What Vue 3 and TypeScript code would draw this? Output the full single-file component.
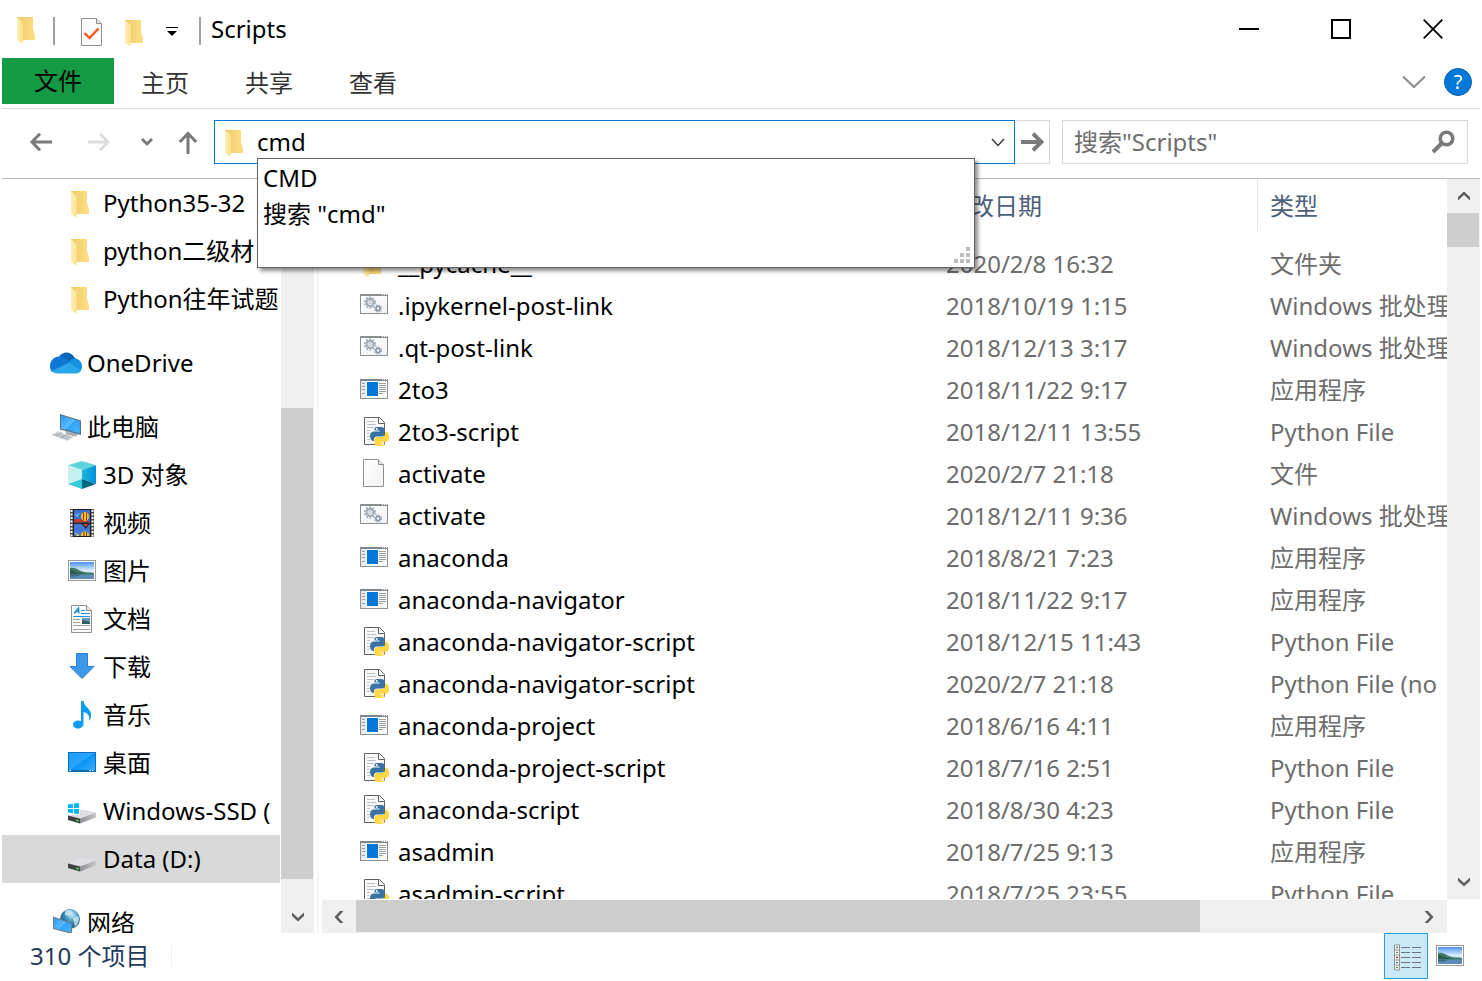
<script setup lang="ts">
import { ref } from 'vue'

type IconName =
  | 'folder' | 'onedrive' | 'pc' | 'cube' | 'video' | 'picture' | 'document'
  | 'download' | 'music' | 'desktop' | 'ssd' | 'drive' | 'network'
  | 'batch' | 'exe' | 'python' | 'blank'

interface TreeItem {
  label: string
  icon: IconName
  selected?: boolean
}

interface TreeGroup {
  root?: TreeItem
  children: TreeItem[]
}

interface FileRow {
  name: string
  icon: IconName
  date: string
  type: string
}

const address = ref('cmd')
const query = ref('')
const suggestions: string[] = ['CMD', '搜索 "cmd"']
const tabs: string[] = ['主页', '共享', '查看']

const tree: TreeGroup[] = [
  {
    children: [
      { label: 'Python35-32', icon: 'folder' },
      { label: 'python二级材', icon: 'folder' },
      { label: 'Python往年试题', icon: 'folder' },
    ],
  },
  { root: { label: 'OneDrive', icon: 'onedrive' }, children: [] },
  {
    root: { label: '此电脑', icon: 'pc' },
    children: [
      { label: '3D 对象', icon: 'cube' },
      { label: '视频', icon: 'video' },
      { label: '图片', icon: 'picture' },
      { label: '文档', icon: 'document' },
      { label: '下载', icon: 'download' },
      { label: '音乐', icon: 'music' },
      { label: '桌面', icon: 'desktop' },
      { label: 'Windows-SSD (', icon: 'ssd' },
      { label: 'Data (D:)', icon: 'drive', selected: true },
    ],
  },
  { root: { label: '网络', icon: 'network' }, children: [] },
]

const BAT = 'Windows 批处理'
const APP = '应用程序'
const PY = 'Python File'

const files: FileRow[] = [
  { name: '__pycache__', icon: 'folder', date: '2020/2/8 16:32', type: '文件夹' },
  { name: '.ipykernel-post-link', icon: 'batch', date: '2018/10/19 1:15', type: BAT },
  { name: '.qt-post-link', icon: 'batch', date: '2018/12/13 3:17', type: BAT },
  { name: '2to3', icon: 'exe', date: '2018/11/22 9:17', type: APP },
  { name: '2to3-script', icon: 'python', date: '2018/12/11 13:55', type: PY },
  { name: 'activate', icon: 'blank', date: '2020/2/7 21:18', type: '文件' },
  { name: 'activate', icon: 'batch', date: '2018/12/11 9:36', type: BAT },
  { name: 'anaconda', icon: 'exe', date: '2018/8/21 7:23', type: APP },
  { name: 'anaconda-navigator', icon: 'exe', date: '2018/11/22 9:17', type: APP },
  { name: 'anaconda-navigator-script', icon: 'python', date: '2018/12/15 11:43', type: PY },
  { name: 'anaconda-navigator-script', icon: 'python', date: '2020/2/7 21:18', type: 'Python File (no' },
  { name: 'anaconda-project', icon: 'exe', date: '2018/6/16 4:11', type: APP },
  { name: 'anaconda-project-script', icon: 'python', date: '2018/7/16 2:51', type: PY },
  { name: 'anaconda-script', icon: 'python', date: '2018/8/30 4:23', type: PY },
  { name: 'asadmin', icon: 'exe', date: '2018/7/25 9:13', type: APP },
  { name: 'asadmin-script', icon: 'python', date: '2018/7/25 23:55', type: PY },
]
</script>

<template>
  <div class="window">
    <svg class="defs" aria-hidden="true">
      <defs>
        <linearGradient id="g-folder" x1="0" x2="1"><stop offset="0" stop-color="#efc968" /><stop offset="1" stop-color="#ffdf85" /></linearGradient>
        <linearGradient id="g-flap" x1="0" x2="1"><stop offset="0" stop-color="#fff0b8" /><stop offset="1" stop-color="#fbdf90" /></linearGradient>
        <linearGradient id="g-screen" x1="0" y1="0" x2="1" y2="1"><stop offset="0" stop-color="#2a9bf5" /><stop offset=".5" stop-color="#5cbcff" /><stop offset=".52" stop-color="#2fa5fb" /><stop offset="1" stop-color="#45b2ff" /></linearGradient>
        <linearGradient id="g-right" x1="0" x2="1"><stop offset="0" stop-color="#1cb8e0" /><stop offset="1" stop-color="#0090d8" /></linearGradient>
        <linearGradient id="g-sky" x1="0" y1="0" x2="0" y2="1"><stop offset="0" stop-color="#4a92ee" /><stop offset=".5" stop-color="#dcefff" /><stop offset="1" stop-color="#8fb8dd" /></linearGradient>
        <linearGradient id="g-desk" x1="0" y1="0" x2="1" y2="1"><stop offset="0" stop-color="#1c9dfb" /><stop offset=".48" stop-color="#27a5ff" /><stop offset=".5" stop-color="#0a93f5" /><stop offset="1" stop-color="#38b0ff" /></linearGradient>
        <linearGradient id="g-side" x1="0" x2="1"><stop offset="0" stop-color="#8c8e92" /><stop offset="1" stop-color="#c6c8cb" /></linearGradient>
        <radialGradient id="g-globe" cx=".6" cy=".3"><stop offset="0" stop-color="#c7ecf8" /><stop offset=".5" stop-color="#5aa9cc" /><stop offset="1" stop-color="#2b6f96" /></radialGradient>
        <linearGradient id="g-page" x1="0" y1="0" x2="1" y2="1"><stop offset="0" stop-color="#ffffff" /><stop offset="1" stop-color="#f1f2f3" /></linearGradient>
      </defs>

      <symbol id="i-folder" viewBox="0 0 28 28" overflow="visible">
        <path d="M3 2H19V15L20 16V18L21 19V25H8Z" fill="url(#g-folder)" />
        <path d="M3 2.500 9 7V25.500L8 28.500 3 25Z" fill="url(#g-flap)" />
      </symbol>
      <symbol id="i-onedrive" viewBox="0 0 32 32">
        <path d="M9 10C12 4 21 4 24 10L27 13 18 18Z" fill="#0364b8" />
        <path d="M0 19C0 13 5 9 10 9.500C13 9.500 15 11 19 14L24 18 2 25C1 24 0 22 0 19Z" fill="#0f78d4" />
        <path d="M19 15C21 12 23 11 25 11.500C29 12 32 15 32 19C32 21 31.500 23 30 25L18 18Z" fill="#1490df" />
        <path d="M2 24 19 15.500 31 23.500C30 25.500 28 26.500 26 26.500H7C4.500 26.500 3 25.500 2 24Z" fill="#28a8ea" />
      </symbol>
      <symbol id="i-pc" viewBox="0 0 32 32">
        <path d="M15 20 28 23 26 25.500 17 24Z" fill="#a6b0b8" />
        <path d="M10 3 31 9.500V24L10 18.500Z" fill="#5b6f80" />
        <path d="M11 4.500 29.800 10.300V22.300L11 17.500Z" fill="url(#g-screen)" />
        <path d="M1 23.500 8 20.500 24 25.500 17 30Z" fill="#d6dade" />
        <path d="M3 23.500 19 28.500M6 22.500 21 27M6 25 12 21.500M11 27 17 23.500" stroke="#98a2ab" stroke-width=".8" fill="none" />
      </symbol>
      <symbol id="i-cube" viewBox="0 0 28 28">
        <path d="M14 0 28 4.300 14 9 0 4.300Z" fill="#5ed3de" />
        <path d="M0 4.300 14 9V18L0 23Z" fill="#c6eff0" />
        <path d="M28 4.300 14 9V18L28 23Z" fill="url(#g-right)" />
        <path d="M0 23 14 18V28Z" fill="#35cbdc" />
        <path d="M28 23 14 18V28Z" fill="#00687f" />
      </symbol>
      <symbol id="i-video" viewBox="0 0 28 28">
        <rect x="2" width="24" height="28" fill="#4a4a4a" />
        <path d="M3.500 1V28M24.500 1V28" stroke="#fff" stroke-width="2" stroke-dasharray="2 1.500" />
        <rect x="6" y="1" width="16" height="12.500" fill="#3c6fd0" />
        <rect x="6" y="15" width="16" height="12.500" fill="#3f78d8" />
        <path d="M6 10.500C9 9 11 10 14 11L22 12.500V13.500H6Z" fill="#c0392b" />
        <path d="M7 5 10 7M11 4 9 8" stroke="#7ed0ff" />
        <ellipse cx="17" cy="7.500" rx="4" ry="4.500" fill="#f5c518" />
        <path d="M15.500 3.500V11.500M18.500 3.500V11.500" stroke="#a02818" />
        <path d="M13 14H22L18 20Z" fill="#22202c" />
        <path d="M15 15H20L18 18Z" fill="#d5482c" />
        <ellipse cx="17" cy="26" rx="4" ry="3.500" fill="#f5c518" />
        <path d="M16 23V28M18.500 23V28" stroke="#8a2a1c" />
        <path d="M7 24 11 26 8 27" stroke="#f0d040" fill="none" />
        <path d="M5.500 0V28M22.500 0V28M5 .500H23M5 14.200H23M5 27.500H23" stroke="#1d1d1d" />
      </symbol>
      <symbol id="i-picture" viewBox="0 0 28 28">
        <rect x=".500" y="3.500" width="27" height="20" fill="#fff" stroke="#9a9a9a" />
        <rect x="2" y="5" width="24" height="17" fill="url(#g-sky)" />
        <path d="M2 11C6 10 9 12 13 14 17 16 22 15 26 16V18H2Z" fill="#3f7a63" />
        <path d="M2 13C6 13 10 16 16 17H2Z" fill="#2a5a4b" />
        <path d="M2 17.500H26V22H2Z" fill="#5b8cb8" />
        <path d="M2 17.500H14L8 19.500H2Z" fill="#39697c" />
      </symbol>
      <symbol id="i-document" viewBox="0 0 28 28">
        <path d="M3.500 .500H18.500L23.500 5.500V27.500H3.500Z" fill="#fafafa" stroke="#8f8f8f" />
        <path d="M18.500 .500V5.500H23.500" fill="#e8e8e8" stroke="#8f8f8f" />
        <path d="M6 8.500 10.500 3 11 8.500M8 6.500H11" stroke="#1487cf" stroke-width="1.300" fill="none" />
        <path d="M13 5.500H17M13 8.500H22M5 11.500H22" stroke="#1e90d8" />
        <path d="M5 14.500H12M5 17.500H12M5 20.500H22M5 24.500H22" stroke="#a2a2a2" />
        <rect x="14" y="13" width="8" height="6" fill="#5f94be" />
        <path d="M14 15 22 17V19H14Z" fill="#2f5f5c" />
      </symbol>
      <symbol id="i-download" viewBox="0 0 28 28">
        <path d="M8.500 .500H19.500V13.500H26L14 25.500 2 13.500H8.500Z" fill="#3d98ea" stroke="#2a7fd0" />
      </symbol>
      <symbol id="i-music" viewBox="0 0 28 28" overflow="visible">
        <path d="M13 0H15.500C16 6 24 8 23 15C23 17 22 19 21 20C22 15 20 12 15.500 11V23C15.500 26 12 28 9 27.500C6 27 4.500 25 5 23C5.500 20.500 9 18.500 13 20Z" fill="#0a9bf2" />
      </symbol>
      <symbol id="i-desktop" viewBox="0 0 28 28">
        <rect x=".500" y="3.500" width="27" height="19" fill="url(#g-desk)" stroke="#0a6fb8" />
        <path d="M1 21.500H27" stroke="#0c6cb0" />
        <path d="M1.500 21.500H3M21.500 21.500H23M24 21.500H25.500" stroke="#fff" />
      </symbol>
      <symbol id="i-drive" viewBox="0 0 28 28">
        <path d="M0 18.500 14 12.500 28 15.500 12 21.500Z" fill="#dddfe2" />
        <path d="M0 18.500 12 21.500V26.500L0 23Z" fill="#3d4043" />
        <path d="M12 21.500 28 15.500V20.500L12 26.500Z" fill="url(#g-side)" />
        <path d="M8 23 11 24" stroke="#35d04e" stroke-width="1.500" />
      </symbol>
      <symbol id="i-ssd" viewBox="0 0 28 28">
        <use href="#i-drive" width="28" height="28" />
        <rect y="5" width="12" height="13" fill="#fff" />
        <path d="M0 7.500 5 6.800V11H0ZM6 6.600 11 6V11H6ZM0 12H5V16.300L0 15.600ZM6 12H11V17L6 16.400Z" fill="#00b7f5" />
      </symbol>
      <symbol id="i-network" viewBox="0 0 32 32">
        <circle cx="20" cy="12" r="10" fill="url(#g-globe)" />
        <path d="M15 4C18 2 22 3 23 5L19 9 15 8ZM23 11 28 9C30 13 28 17 25 20Z" fill="#dff3fa" opacity=".7" />
        <path d="M3 9.500 22 16V27L3 22Z" fill="#6b7f8c" />
        <path d="M4 11 21 16.800V25.500L4 21Z" fill="url(#g-screen)" />
      </symbol>

      <symbol id="i-batch" viewBox="0 0 28 28">
        <rect x=".500" y="3.500" width="27" height="19" fill="url(#g-page)" stroke="#8a8f94" />
        <path d="M0 4H28" stroke="#8a8f94" stroke-width="2" />
        <path d="M22 3.500H23M24 3.500H25M26 3.500H27" stroke="#fff" />
        <circle cx="10" cy="11.500" r="5.200" fill="none" stroke="#a9b4bd" stroke-width="2" stroke-dasharray="2 1.270" />
        <circle cx="10" cy="11.500" r="3.500" fill="#eef1f4" stroke="#9aa6b0" stroke-width="1.800" />
        <circle cx="10" cy="11.500" r="1.200" fill="#fff" stroke="#8e9aa4" stroke-width=".6" />
        <circle cx="18" cy="17.500" r="3.300" fill="none" stroke="#9aa6af" stroke-width="1.400" stroke-dasharray="1.500 1.090" />
        <circle cx="18" cy="17.500" r="2" fill="#fff" stroke="#8593a0" stroke-width="1.500" />
      </symbol>
      <symbol id="i-exe" viewBox="0 0 28 28">
        <rect x=".500" y="4.500" width="27" height="19" fill="#fbfbfb" stroke="#8a8f94" />
        <path d="M0 5H28" stroke="#7f868c" stroke-width="2" />
        <path d="M22 4.500H23M24 4.500H25M26 4.500H27" stroke="#fff" />
        <rect x="1" y="6" width="5" height="17" fill="#e9eaec" />
        <path d="M2 8.500H5M2 11.500H5M2 14.500H5M2 18.500H5M19 8.500H26M19 10.500H26M19 12.500H26M19 14.500H26M19 16.500H26M19 18.500H23" stroke="#9a9da0" />
        <rect x="7" y="7" width="11" height="14" fill="#0078d7" />
      </symbol>
      <symbol id="i-python" viewBox="0 0 28 28" overflow="visible">
        <path d="M4.500 .500H19.500L24.500 5.500V27.500H4.500Z" fill="#fafafa" stroke="#5f5f5f" />
        <path d="M18.500 .500V6.500H24.500" fill="#fff" stroke="#5f5f5f" />
        <path d="M7 4.500H15M7 7.500H16M7 10.500H14M7 13.500H10M7 16.500H9M7 19.500H10M7 22.500H10" stroke="#bdbdbd" />
        <path d="M17 10H21C23.500 10 24.500 11 24.500 13V17C24.500 19 23.500 19.500 22 19.500H17C15 19.500 14 20.500 14 22.500V24C11.500 24 10 22.500 10 19C10 16 11.500 14.500 14 14.500H19.500V13.500H14.500V12C14.500 10.700 15.500 10 17 10Z" fill="#3973a6" />
        <circle cx="16.800" cy="12" r=".9" fill="#fff" />
        <path d="M22 29H18C15.500 29 14.500 28 14.500 26V23C14.500 21 15.500 20 17.500 20H22C24 20 25 19 25 17V14.500C28 14.500 29.200 17 29.200 20C29.200 23 28 24.800 25.500 24.800H20V25.500H24.500V27C24.500 28.300 23.500 29 22 29Z" fill="#ffd845" />
        <circle cx="22.500" cy="27.200" r=".9" fill="#fff" />
      </symbol>
      <symbol id="i-blank" viewBox="0 0 28 28">
        <path d="M3.500 .500H18.500L23.500 5.500V27.500H3.500Z" fill="url(#g-page)" stroke="#8f8f8f" />
        <path d="M18.500 .500V5.500H23.500" fill="#e6e6e6" stroke="#8f8f8f" />
      </symbol>
      <symbol id="i-chevron" viewBox="0 0 12 12">
        <path d="M0 1.500V5L6 10.500 12 5V1.500L6 7Z" fill="currentColor" />
      </symbol>
    </svg>

    <header class="titlebar">
      <svg class="icon title-folder" aria-hidden="true"><use href="#i-folder" /></svg>
      <span class="divider"></span>
      <button class="quick props" aria-label="属性">
        <svg class="icon" viewBox="0 0 28 28" aria-hidden="true">
          <path d="M3.500 .500H18.500L23.500 5.500V27.500H3.500Z" fill="#fbfbfb" stroke="#8f8f8f" />
          <path d="M18.500 .500V5.500H23.500" fill="#e6e6e6" stroke="#8f8f8f" />
          <path d="M6.500 15 11.500 20 20.500 10.500" fill="none" stroke="#f4581c" stroke-width="2.400" />
        </svg>
      </button>
      <button class="quick new-folder" aria-label="新建文件夹">
        <svg class="icon" aria-hidden="true"><use href="#i-folder" /></svg>
      </button>
      <button class="quick customize" aria-label="自定义快速访问工具栏">
        <svg width="12" height="10" viewBox="0 0 12 10" aria-hidden="true">
          <path d="M0 .500H12" stroke="#000" /><path d="M1 4H11L6 9Z" fill="#000" />
        </svg>
      </button>
      <span class="divider"></span>
      <h1 class="title">Scripts</h1>
      <div class="window-buttons">
        <button aria-label="最小化"><svg width="20" height="20" viewBox="0 0 20 20"><path d="M0 10H20" stroke="#000" stroke-width="2" /></svg></button>
        <button aria-label="最大化"><svg width="20" height="20" viewBox="0 0 20 20"><rect x="1" y="1" width="18" height="18" fill="none" stroke="#000" stroke-width="2" /></svg></button>
        <button aria-label="关闭"><svg width="20" height="20" viewBox="0 0 20 20"><path d="M.7.7 19.300 19.300M19.300.7.7 19.300" stroke="#000" stroke-width="1.800" /></svg></button>
      </div>
    </header>

    <div class="ribbon">
      <button class="file-tab">文件</button>
      <div class="tabs">
        <button v-for="tab in tabs" :key="tab" class="tab">{{ tab }}</button>
      </div>
      <div class="ribbon-tools">
        <button class="plain" aria-label="展开功能区">
          <svg width="24" height="14" viewBox="0 0 24 14"><path d="M1 1.500 12 12 23 1.500" fill="none" stroke="#8a8a8a" stroke-width="2" /></svg>
        </button>
        <button class="help" aria-label="帮助">?</button>
      </div>
    </div>

    <div class="navbar">
      <button class="nav back" aria-label="后退">
        <svg width="24" height="20" viewBox="0 0 24 20"><path d="M23 10H3M11 1.800 3 10 11 18.200" fill="none" stroke="#7a7a7a" stroke-width="3" /></svg>
      </button>
      <button class="nav forward" aria-label="前进" disabled>
        <svg width="24" height="20" viewBox="0 0 24 20"><path d="M1 10H21M13 1.800 21 10 13 18.200" fill="none" stroke="#dcdcdc" stroke-width="3" /></svg>
      </button>
      <button class="nav recent" aria-label="最近浏览的位置">
        <svg width="14" height="10" viewBox="0 0 14 10"><path d="M2 2 7 7 12 2" fill="none" stroke="#7a7a7a" stroke-width="3" /></svg>
      </button>
      <button class="nav up" aria-label="上移">
        <svg width="20" height="24" viewBox="0 0 20 24"><path d="M10 24V4M1.800 12 10 3.500 18.200 12" fill="none" stroke="#7a7a7a" stroke-width="3" /></svg>
      </button>

      <div class="address">
        <svg class="icon" aria-hidden="true"><use href="#i-folder" /></svg>
        <input v-model="address" class="address-input" type="text" aria-label="地址" />
        <button class="plain drop" aria-label="以前的位置">
          <svg width="14" height="9" viewBox="0 0 14 9"><path d="M1 1 7 7.500 13 1" fill="none" stroke="#333" stroke-width="1.400" /></svg>
        </button>
        <ul class="suggestions">
          <li v-for="s in suggestions" :key="s"><button class="suggestion">{{ s }}</button></li>
          <li class="grip" aria-hidden="true">
            <svg width="16" height="16" viewBox="0 0 16 16"><path d="M12 0h4v4h-4zM12 6h4v4h-4zM12 12h4v4h-4zM6 6h4v4H6zM6 12h4v4H6zM0 12h4v4H0z" fill="#bdbdbd" /></svg>
          </li>
        </ul>
      </div>
      <button class="go" aria-label="转到">
        <svg width="24" height="20" viewBox="0 0 24 20"><path d="M1 10H21M13 1.800 21.500 10 13 18.200" fill="none" stroke="#7a7a7a" stroke-width="4" /></svg>
      </button>
      <div class="search">
        <input v-model="query" class="search-input" type="text" aria-label="搜索" placeholder="搜索&quot;Scripts&quot;" />
        <svg width="24" height="24" viewBox="0 0 24 24" aria-hidden="true">
          <circle cx="15.500" cy="8.500" r="6.300" fill="none" stroke="#7a7a7a" stroke-width="3.600" /><path d="M11 13 2 22" stroke="#7a7a7a" stroke-width="4" />
        </svg>
      </div>
    </div>

    <div class="body">
      <nav class="tree" aria-label="导航窗格">
        <div v-for="(group, gi) in tree" :key="gi" class="group">
          <a v-if="group.root" href="#" class="node root">
            <svg class="icon big" aria-hidden="true"><use :href="'#i-' + group.root.icon" /></svg>
            <span>{{ group.root.label }}</span>
          </a>
          <a v-for="item in group.children" :key="item.label" href="#" class="node" :class="{ selected: item.selected }">
            <svg class="icon" aria-hidden="true"><use :href="'#i-' + item.icon" /></svg>
            <span>{{ item.label }}</span>
          </a>
        </div>
      </nav>
      <div class="scroll vertical tree-scroll">
        <div class="track">
          <div class="before"></div><div class="thumb"></div><div class="after"></div>
        </div>
        <button class="arrow" aria-label="向下滚动"><svg width="12" height="12"><use href="#i-chevron" /></svg></button>
      </div>

      <main class="pane">
        <div class="list">
          <table>
            <colgroup><col class="c-name" /><col class="c-date" /><col class="c-type" /></colgroup>
            <thead>
              <tr><th><div class="head first">名称</div></th><th><div class="head">修改日期</div></th><th><div class="head last">类型</div></th></tr>
            </thead>
            <tbody>
              <tr v-for="(file, i) in files" :key="i">
                <td>
                  <div class="name">
                    <svg class="icon" aria-hidden="true"><use :href="'#i-' + file.icon" /></svg>
                    <span>{{ file.name }}</span>
                  </div>
                </td>
                <td class="meta">{{ file.date }}</td>
                <td class="meta">{{ file.type }}</td>
              </tr>
            </tbody>
          </table>
        </div>
        <div class="scroll vertical list-scroll">
          <button class="arrow" aria-label="向上滚动"><svg class="flip" width="12" height="12"><use href="#i-chevron" /></svg></button>
          <div class="track"><div class="thumb"></div></div>
          <button class="arrow" aria-label="向下滚动"><svg width="12" height="12"><use href="#i-chevron" /></svg></button>
        </div>
        <div class="scroll horizontal">
          <button class="arrow" aria-label="向左滚动"><svg class="left" width="12" height="12"><use href="#i-chevron" /></svg></button>
          <div class="track"><div class="thumb"></div></div>
          <button class="arrow" aria-label="向右滚动"><svg class="right" width="12" height="12"><use href="#i-chevron" /></svg></button>
        </div>
      </main>
    </div>

    <footer class="status">
      <span class="count">310 个项目</span>
      <div class="views">
        <button class="view active" aria-label="详细信息">
          <svg width="28" height="28" viewBox="0 0 28 28">
            <path d="M.500 1H5.500V26H.500ZM.500 6H5.500M.500 11H5.500M.500 16H5.500M.500 21H5.500" fill="#fff" stroke="#8f8f8f" />
            <path d="M2 3.500H4M2 18.500H4" stroke="#3d7ba8" stroke-width="1.500" />
            <path d="M2 8.500H4M2 23.500H4" stroke="#4c8a55" stroke-width="1.500" />
            <path d="M2 13.500H4" stroke="#c22" stroke-width="1.500" />
            <path d="M7 3.500H16M18 3.500H27M7 8.500H16M18 8.500H27M7 13.500H16M18 13.500H27M7 18.500H16M18 18.500H27M7 23.500H16M18 23.500H27" stroke="#6f7478" />
          </svg>
        </button>
        <button class="view" aria-label="大缩略图">
          <svg class="icon" aria-hidden="true"><use href="#i-picture" /></svg>
        </button>
      </div>
    </footer>
  </div>
</template>

<style>
body {
  margin: 0;
  background: #fff;
}
</style>

<style scoped>
.window {
  box-sizing: border-box;
  display: flex;
  flex-direction: column;
  height: 100vh;
  padding: 0 2px;
  overflow: hidden;
  background: #fff;
  color: #000;
  font: 24px/36px "Noto Sans", "Noto Sans CJK SC", sans-serif;
}
.window *,
.window *::before {
  box-sizing: border-box;
}
button {
  display: flex;
  align-items: center;
  justify-content: center;
  padding: 0;
  border: 0;
  background: none;
  color: inherit;
  font: inherit;
}
input {
  min-width: 0;
  padding: 0;
  border: 0;
  outline: 0;
  background: none;
  color: inherit;
  font: inherit;
}
ul {
  margin: 0;
  padding: 0;
  list-style: none;
}
svg {
  display: block;
  flex: none;
}
.defs {
  position: absolute;
  width: 0;
  height: 0;
}
.icon {
  width: 28px;
  height: 28px;
  overflow: visible;
}
.icon.big {
  width: 32px;
  height: 32px;
}

.titlebar {
  display: flex;
  flex: none;
  align-items: center;
  height: 58px;
  padding-left: 12px;
}
.divider {
  width: 2px;
  height: 28px;
  margin-top: 4px;
  background: #a0a0a0;
}
.title-folder {
  margin-right: 11px;
}
.quick {
  height: 28px;
}
.props {
  margin: 6px 0 0 23px;
}
.new-folder {
  margin: 6px 0 0 16px;
}
.customize {
  width: 12px;
  margin: 6px 21px 0 16px;
}
.title {
  margin: 0 0 0 10px;
  font: inherit;
}
.window-buttons {
  display: flex;
  margin-left: auto;
  padding-right: 1px;
}
.window-buttons button {
  width: 92px;
  height: 58px;
}

.ribbon {
  display: flex;
  flex: none;
  align-items: flex-start;
  height: 51px;
  border-bottom: 1px solid #dadbdc;
}
.file-tab {
  width: 112px;
  height: 46px;
  background: #149945;
}
.tabs {
  display: flex;
  margin-left: -1px;
}
.tab {
  width: 104px;
  height: 50px;
  color: #333;
}
.ribbon-tools {
  display: flex;
  gap: 18px;
  align-items: center;
  height: 48px;
  margin-left: auto;
  padding-right: 8px;
}
.help {
  width: 28px;
  height: 28px;
  border: 1px solid #0a5ca8;
  border-radius: 50%;
  background: #0078d7;
  color: #fff;
  font-size: 20px;
}

.navbar {
  display: flex;
  flex: none;
  align-items: center;
  height: 70px;
  padding: 0 12px 3px 10px;
  border-bottom: 1px solid #b9b9b9;
}
.nav {
  height: 44px;
}
.back,
.forward {
  width: 58px;
}
.recent {
  width: 38px;
}
.up {
  width: 44px;
  margin-right: 4px;
}
.address {
  position: relative;
  display: flex;
  flex: 1;
  align-items: center;
  height: 44px;
  padding-left: 7px;
  border: 1px solid #0078d7;
}
.address-input {
  flex: 1;
  height: 36px;
  margin-left: 7px;
}
.drop {
  width: 32px;
  height: 42px;
}
.suggestions {
  position: absolute;
  z-index: 2;
  top: 37px;
  right: 39px;
  left: 42px;
  height: 110px;
  padding: 1px 5px;
  border: 1px solid #646464;
  background: #fff;
  box-shadow: 3px 3px 4px rgba(0, 0, 0, 0.45);
}
.suggestion {
  justify-content: flex-start;
  width: 100%;
  height: 36px;
}
.grip {
  position: absolute;
  right: 4px;
  bottom: 4px;
}
.go {
  width: 35px;
  height: 44px;
  border: 1px solid #d9d9d9;
  border-left: 0;
}
.search {
  display: flex;
  align-items: center;
  width: 406px;
  height: 44px;
  margin-left: 12px;
  padding: 0 12px 0 11px;
  border: 1px solid #d9d9d9;
  color: #6d6d6d;
}
.search-input {
  flex: 1;
  height: 36px;
}
.search-input::placeholder {
  color: #6d6d6d;
  opacity: 1;
}

.body {
  display: flex;
  flex: 1;
  min-height: 0;
}
.tree {
  width: 278px;
  margin-right: 1px;
  overflow: hidden;
}
.group + .group {
  margin-top: 16px;
}
.node {
  display: flex;
  gap: 7px;
  align-items: center;
  height: 48px;
  padding-left: 66px;
  color: #000;
  text-decoration: none;
  white-space: nowrap;
}
.root {
  gap: 5px;
  padding-left: 48px;
}
.selected {
  background: #d9d9d9;
}

.scroll {
  display: flex;
  background: #f0f0f0;
  color: #606060;
}
.vertical {
  flex-direction: column;
  width: 33px;
}
.track {
  display: flex;
  flex: 1;
  flex-direction: inherit;
}
.thumb {
  background: #cdcdcd;
}
.arrow {
  flex: none;
  width: 33px;
  height: 33px;
}
.tree-scroll .before {
  flex: 229;
}
.tree-scroll .thumb {
  flex: 471;
  width: 32px;
}
.tree-scroll .after {
  flex: 21;
}
.list-scroll .arrow {
  height: 34px;
}
.list-scroll .thumb {
  width: 32px;
  height: 34px;
}
.horizontal .arrow:first-child {
  width: 34px;
}
.horizontal .arrow:last-child {
  width: 36px;
}
.horizontal .track {
  flex-direction: row;
}
.horizontal .thumb {
  width: 80%;
  height: 32px;
}
.flip {
  transform: rotate(180deg);
}
.left {
  transform: rotate(90deg);
}
.right {
  transform: rotate(-90deg);
}

.pane {
  display: grid;
  flex: 1;
  grid-template-rows: minmax(0, 1fr) 33px;
  grid-template-columns: minmax(0, 1fr) 33px;
  row-gap: 1px;
  min-width: 0;
  margin-left: 3px;
  padding-left: 3px;
  border-left: 2px solid #f5f5f5;
}
.list {
  overflow: hidden;
}
table {
  width: 100%;
  border-collapse: collapse;
  table-layout: fixed;
}
.c-name {
  width: 612px;
}
.c-date {
  width: 324px;
}
th {
  height: 64px;
  padding: 0;
  font-weight: 400;
  text-align: left;
  vertical-align: top;
}
.head {
  height: 52px;
  padding-left: 12px;
  border-right: 1px solid #e5e5e5;
  color: #4c607a;
  line-height: 54px;
}
.head.first {
  padding-left: 76px;
}
.head.last {
  border-right: 0;
}
td {
  height: 42px;
  padding: 0;
  overflow: hidden;
  white-space: nowrap;
}
.name {
  display: flex;
  gap: 10px;
  align-items: center;
  padding-left: 38px;
}
.name .icon {
  margin-bottom: 2px;
}
.meta {
  padding-left: 12px;
  color: #6d6d6d;
}

.status {
  display: flex;
  flex: none;
  align-items: flex-start;
  justify-content: space-between;
  height: 48px;
  padding: 0 8px 0 28px;
  color: #1e395b;
}
.count {
  height: 22px;
  margin-top: 12px;
  padding-right: 22px;
  border-right: 1px solid #f0f0f0;
  line-height: 22px;
}
.views {
  display: flex;
}
.view {
  width: 44px;
  height: 46px;
}
.active {
  padding: 4px 0 0 4px;
  border: 1px solid #26a0da;
  background: #cbe8f6;
}
</style>
